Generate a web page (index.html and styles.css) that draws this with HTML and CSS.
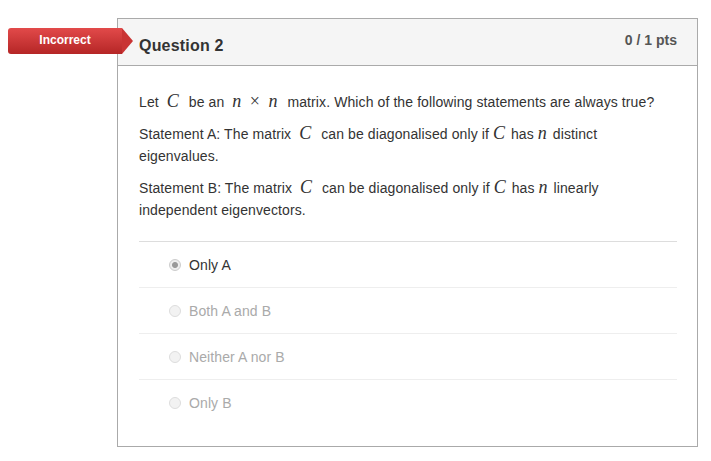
FILE: index.html
```html
<!DOCTYPE html>
<html lang="en">
<head>
    <meta charset="UTF-8">
    <title>Question 2</title>
    <link rel="stylesheet" href="styles.css">
</head>
<body>

    <div class="question">
        <div class="badge">Incorrect</div>

        <div class="question-header">
            <h2>Question 2</h2>
            <div class="pts">0 / 1 pts</div>
        </div>

        <div class="question-body">
            <p>Let <span class="math">C</span> be an <span class="math">n <span class="op">×</span> n</span> matrix. Which of the following statements are always true?</p>
            <p>Statement A: The matrix <span class="math">C</span> can be diagonalised only if <span class="math tight">C</span> has <span class="math tight">n</span> distinct eigenvalues.</p>
            <p>Statement B: The matrix <span class="math">C</span> can be diagonalised only if <span class="math tight">C</span> has <span class="math tight">n</span> linearly independent eigenvectors.</p>

            <div class="answers">
                <label class="answer selected">
                    <span class="radio checked"></span> Only A
                </label>
                <label class="answer">
                    <span class="radio"></span> Both A and B
                </label>
                <label class="answer">
                    <span class="radio"></span> Neither A nor B
                </label>
                <label class="answer">
                    <span class="radio"></span> Only B
                </label>
            </div>
        </div>
    </div>

</body>
</html>
```

FILE: styles.css
```css
body {
    font-family: "Liberation Sans", Arial, sans-serif;
    background-color: #fff;
    color: #333;
    margin: 0;
    padding: 18px 0 0 117px;
}

.question {
    position: relative;
    width: 579px;
    border: 1px solid #aaa;
}

/* Etiqueta vermelha à esquerda */
.badge {
    position: absolute;
    left: -110px;
    top: 9px;
    width: 114px;
    height: 26px;
    line-height: 25px;
    text-align: center;
    color: #fff;
    font-size: 12px;
    font-weight: bold;
    background: linear-gradient(#e24a4a, #b52626);
    border-radius: 3px 0 0 3px;
}

.badge::after {
    content: "";
    position: absolute;
    right: -11px;
    top: 0;
    border-left: 11px solid #c93434;
    border-top: 13px solid transparent;
    border-bottom: 13px solid transparent;
}

.question-header {
    display: flex;
    justify-content: space-between;
    align-items: flex-start;
    height: 46px;
    padding: 0 20px 0 21px;
    background-color: #f5f5f5;
    border-bottom: 1px solid #aaa;
}

.question-header h2 {
    margin: 17px 0 0;
    font-size: 16px;
    line-height: 19px;
    letter-spacing: 0.2px;
    color: #333;
}

.pts {
    margin-top: 13px;
    font-size: 14px;
    font-weight: bold;
    line-height: 16px;
    color: #555;
}

.question-body {
    padding: 25px 20px 21px 21px;
    font-size: 14px;
    letter-spacing: 0.1px;
}

.question-body p {
    margin: 0 0 10px;
    line-height: 22px;
}

.math {
    font-family: "Liberation Serif", "Times New Roman", serif;
    font-style: italic;
    font-size: 18px;
    line-height: 16px;
    letter-spacing: 0;
    padding: 0 6px 0 4px;
}

.math.tight {
    padding: 0 2px 0 0;
}

.math .op {
    font-style: normal;
    padding: 0 4px;
}

.answers {
    margin-top: 20px;
    border-top: 1px solid #ddd;
}

.answer {
    display: flex;
    align-items: center;
    gap: 8px;
    height: 45px;
    padding-left: 30px;
    color: #aaa;
    border-bottom: 1px solid #eee;
}

.answer:last-child {
    border-bottom: none;
}

.answer.selected {
    color: #333;
}

.radio {
    display: inline-block;
    box-sizing: border-box;
    width: 12px;
    height: 12px;
    border-radius: 50%;
    border: 1px solid #ddd;
    background-color: #f2f2f2;
}

.radio.checked {
    border-color: #ccc;
    background: radial-gradient(circle, #999 0 2.5px, #eee 3.5px);
}
```
